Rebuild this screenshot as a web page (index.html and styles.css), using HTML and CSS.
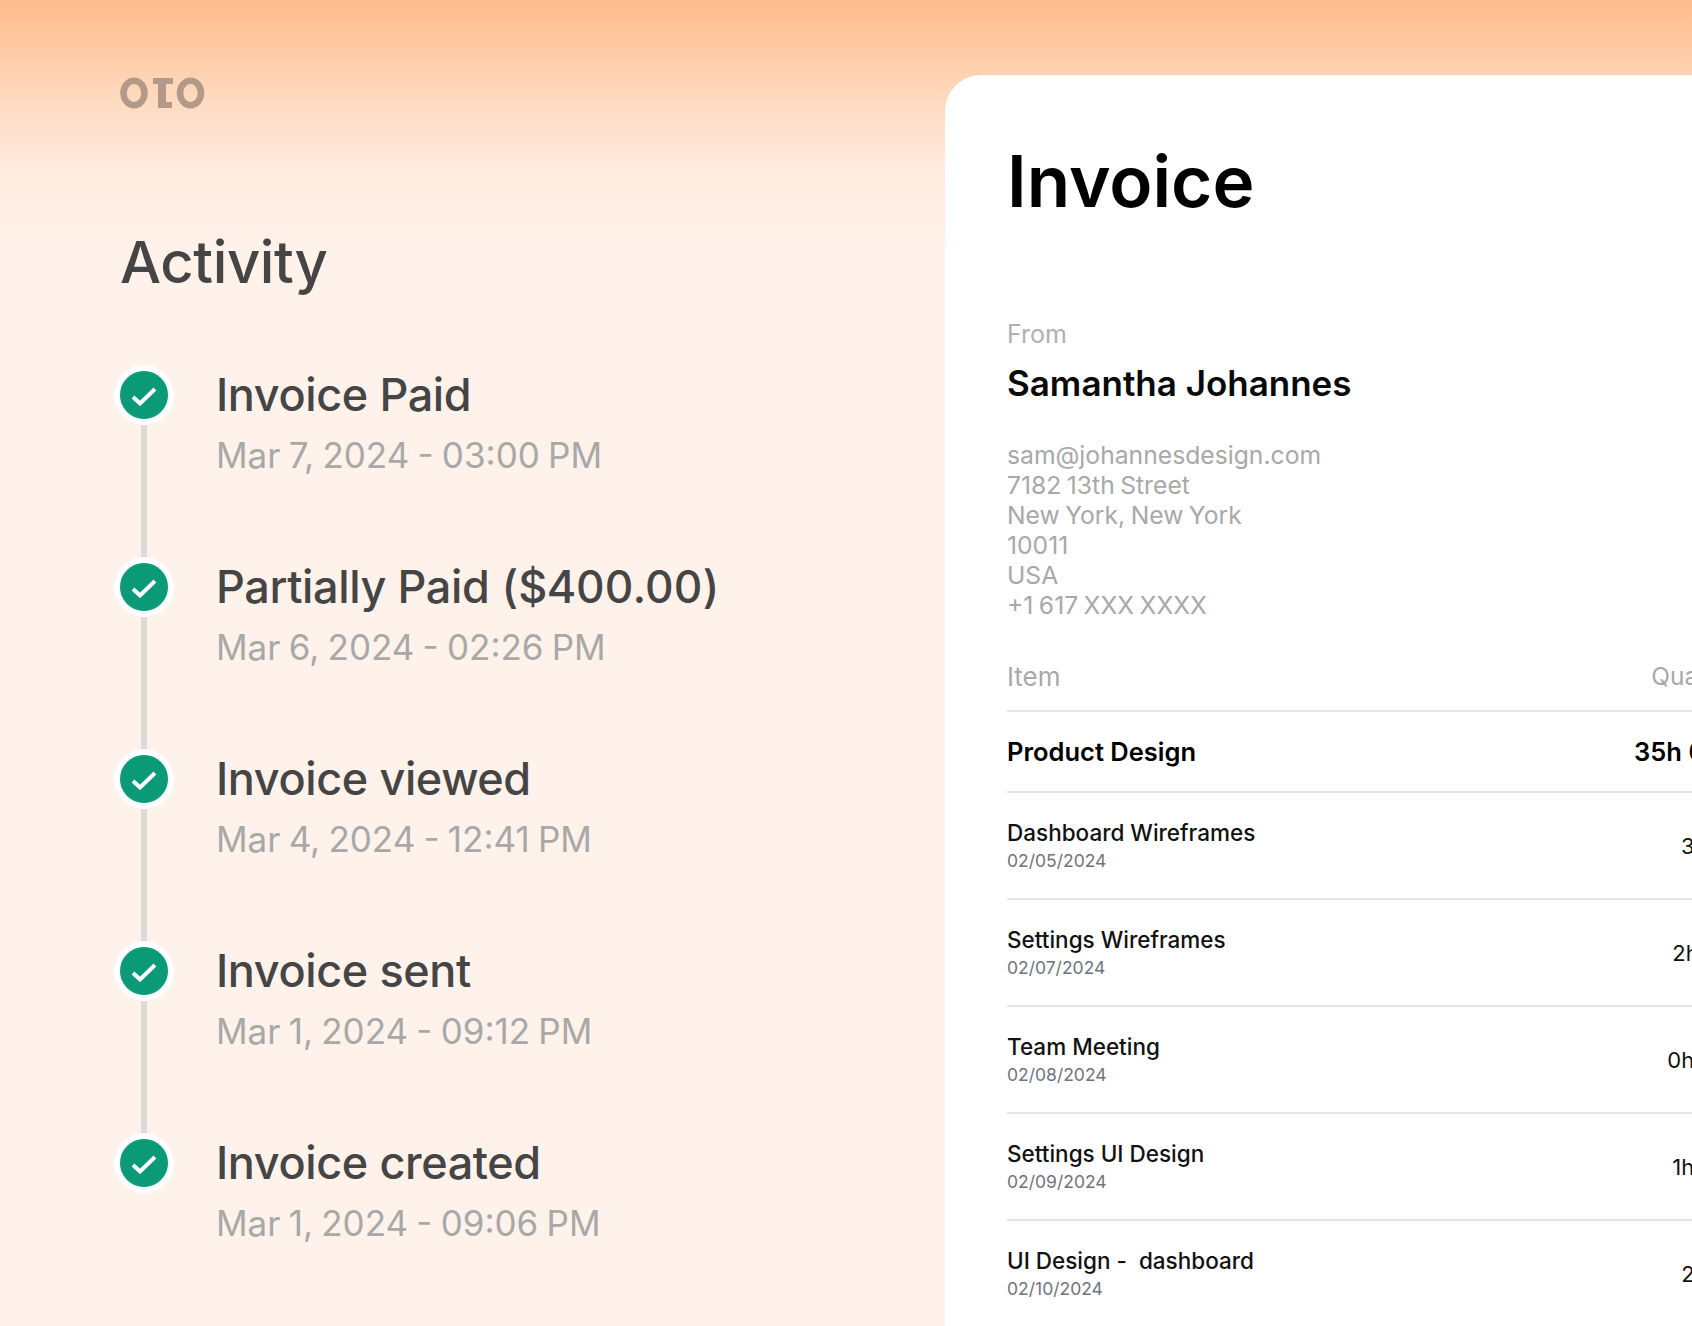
FILE: index.html
```html
<!DOCTYPE html>
<html lang="en">
<head>
  <meta charset="utf-8">
  <meta name="viewport" content="width=device-width, initial-scale=1.0">
  <title>Invoice Activity</title>
  <link rel="stylesheet" href="styles.css">
</head>
<body>
  <div class="page">
    <div class="activity-side">
      <svg class="logo" width="86" height="34" viewBox="-1 0 86 34" aria-label="oto logo">
        <ellipse cx="13" cy="17" rx="10.5" ry="12.2" fill="none" stroke="currentColor" stroke-width="6.6"/>
        <ellipse cx="69.5" cy="17" rx="10.5" ry="12.2" fill="none" stroke="currentColor" stroke-width="6.6"/>
        <path d="M32 2h20v6h-7v18h6v6H37V8h-5z" fill="currentColor"/>
      </svg>

      <h2 class="activity-title">Activity</h2>

      <div class="timeline">
        <div class="step">
          <div class="step-mark">
            <span class="check">
              <svg width="30" height="30" viewBox="0 0 30 30"><path d="M4 17l7 6.5L26 9" fill="none" stroke="#fff" stroke-width="4"/></svg>
            </span>
            <span class="step-line"></span>
          </div>
          <div class="step-text">
            <div class="step-name">Invoice Paid</div>
            <div class="step-date">Mar 7, 2024 - 03:00 PM</div>
          </div>
        </div>
        <div class="step">
          <div class="step-mark">
            <span class="check">
              <svg width="30" height="30" viewBox="0 0 30 30"><path d="M4 17l7 6.5L26 9" fill="none" stroke="#fff" stroke-width="4"/></svg>
            </span>
            <span class="step-line"></span>
          </div>
          <div class="step-text">
            <div class="step-name">Partially Paid ($400.00)</div>
            <div class="step-date">Mar 6, 2024 - 02:26 PM</div>
          </div>
        </div>
        <div class="step">
          <div class="step-mark">
            <span class="check">
              <svg width="30" height="30" viewBox="0 0 30 30"><path d="M4 17l7 6.5L26 9" fill="none" stroke="#fff" stroke-width="4"/></svg>
            </span>
            <span class="step-line"></span>
          </div>
          <div class="step-text">
            <div class="step-name">Invoice viewed</div>
            <div class="step-date">Mar 4, 2024 - 12:41 PM</div>
          </div>
        </div>
        <div class="step">
          <div class="step-mark">
            <span class="check">
              <svg width="30" height="30" viewBox="0 0 30 30"><path d="M4 17l7 6.5L26 9" fill="none" stroke="#fff" stroke-width="4"/></svg>
            </span>
            <span class="step-line"></span>
          </div>
          <div class="step-text">
            <div class="step-name">Invoice sent</div>
            <div class="step-date">Mar 1, 2024 - 09:12 PM</div>
          </div>
        </div>
        <div class="step">
          <div class="step-mark">
            <span class="check">
              <svg width="30" height="30" viewBox="0 0 30 30"><path d="M4 17l7 6.5L26 9" fill="none" stroke="#fff" stroke-width="4"/></svg>
            </span>
          </div>
          <div class="step-text">
            <div class="step-name">Invoice created</div>
            <div class="step-date">Mar 1, 2024 - 09:06 PM</div>
          </div>
        </div>
      </div>
    </div>

    <div class="invoice-card">
      <h1 class="invoice-title">Invoice</h1>

      <div class="from-label">From</div>
      <div class="from-name">Samantha Johannes</div>
      <div class="from-address">
        sam@johannesdesign.com<br>
        7182 13th Street<br>
        New York, New York<br>
        10011<br>
        USA<br>
        +1 617 XXX XXXX
      </div>

      <div class="items">
        <div class="item-row item-head">
          <span>Item</span>
          <span class="qty">Quantity</span>
        </div>
        <div class="item-row item-total">
          <span>Product Design</span>
          <span class="qty">35h 00m</span>
        </div>
        <div class="item-row">
          <div>
            <div class="item-name">Dashboard Wireframes</div>
            <div class="item-date">02/05/2024</div>
          </div>
          <span class="qty">3h 1m</span>
        </div>
        <div class="item-row">
          <div>
            <div class="item-name">Settings Wireframes</div>
            <div class="item-date">02/07/2024</div>
          </div>
          <span class="qty">2h 11m</span>
        </div>
        <div class="item-row">
          <div>
            <div class="item-name">Team Meeting</div>
            <div class="item-date">02/08/2024</div>
          </div>
          <span class="qty">0h 15m</span>
        </div>
        <div class="item-row">
          <div>
            <div class="item-name">Settings UI Design</div>
            <div class="item-date">02/09/2024</div>
          </div>
          <span class="qty">1h 15m</span>
        </div>
        <div class="item-row">
          <div>
            <div class="item-name">UI Design -&nbsp; dashboard</div>
            <div class="item-date">02/10/2024</div>
          </div>
          <span class="qty">2h 1m</span>
        </div>
      </div>
    </div>
  </div>
</body>
</html>
```

FILE: styles.css
```css
* {
  box-sizing: border-box;
  margin: 0;
  padding: 0;
}

html, body {
  height: 100%;
  overflow: hidden;
}

body {
  font-family: Inter, "Liberation Sans", sans-serif;
  background: #fff2ea;
}

.page {
  display: flex;
  height: 1326px;
  background: linear-gradient(to bottom, #ffba8b 0, #ffdabf 100px, #ffebdf 170px, #fff2ea 250px);
  overflow: hidden;
}

/* Left side */
.activity-side {
  width: 945px;
  flex-shrink: 0;
  padding: 76px 0 0 120px;
}

.logo {
  display: block;
  color: #b39a88;
}

.activity-title {
  margin-top: 117px;
  font-size: 58px;
  line-height: 70px;
  font-weight: 500;
  color: #454545;
  letter-spacing: -0.4px;
}

.timeline {
  margin-top: 68px;
  margin-left: -6px;
}

.step {
  display: flex;
  height: 192px;
  gap: 42px;
}

.step-mark {
  display: flex;
  flex-direction: column;
  align-items: center;
  width: 60px;
}

.check {
  display: flex;
  align-items: center;
  justify-content: center;
  width: 60px;
  height: 60px;
  flex-shrink: 0;
  border-radius: 50%;
  background: #0b9a78;
  border: 6px solid #fff;
}

.step-line {
  width: 6px;
  flex: 1;
  background: #dddbd9;
}

.step-name {
  font-size: 45px;
  line-height: 60px;
  font-weight: 500;
  color: #454545;
  letter-spacing: -0.4px;
  font-feature-settings: "tnum";
}

.step-date {
  font-size: 35px;
  line-height: 60px;
  word-spacing: -1.6px;
  color: #a8a8a8;
}

/* Invoice card */
.invoice-card {
  flex: 1;
  min-width: 0;
  margin-top: 75px;
  padding: 0 0 0 62px;
  background: #fff;
  border-top-left-radius: 36px;
  overflow: hidden;
}

.invoice-title {
  margin-top: 66px;
  font-size: 71px;
  line-height: 80px;
  font-weight: 600;
  color: #000;
}

.from-label {
  margin-top: 97px;
  font-size: 25px;
  line-height: 32px;
  color: #b0b0b0;
}

.from-name {
  margin-top: 11px;
  font-size: 35px;
  line-height: 44px;
  font-weight: 600;
  color: #0a0a0a;
}

.from-address {
  margin-top: 35px;
  font-size: 24.7px;
  line-height: 30px;
  word-spacing: -1.5px;
  color: #a8a8a8;
}

.items {
  width: 800px;
  margin-top: 26px;
}

.item-row {
  display: flex;
  justify-content: space-between;
  align-items: center;
  height: 107px;
  padding-right: 65px;
  border-bottom: 2px solid #e4e4e4;
}

.item-head {
  height: 66px;
  padding-bottom: 4px;
  padding-right: 58px;
  font-size: 26px;
  color: #a8a8a8;
}

.item-total {
  height: 81px;
  padding-right: 62px;
  font-size: 25.5px;
  font-weight: 600;
  color: #000;
}

.qty {
  font-size: 22px;
  color: #111;
}

.item-head .qty {
  font-size: 24.5px;
  color: #a8a8a8;
}

.item-total .qty {
  font-size: 25.5px;
  color: #000;
}

.item-name {
  font-size: 22.5px;
  line-height: 30px;
  font-weight: 500;
  color: #111;
}

.item-date {
  margin-top: 1px;
  font-size: 17.5px;
  line-height: 24px;
  color: #6f7380;
}
```
